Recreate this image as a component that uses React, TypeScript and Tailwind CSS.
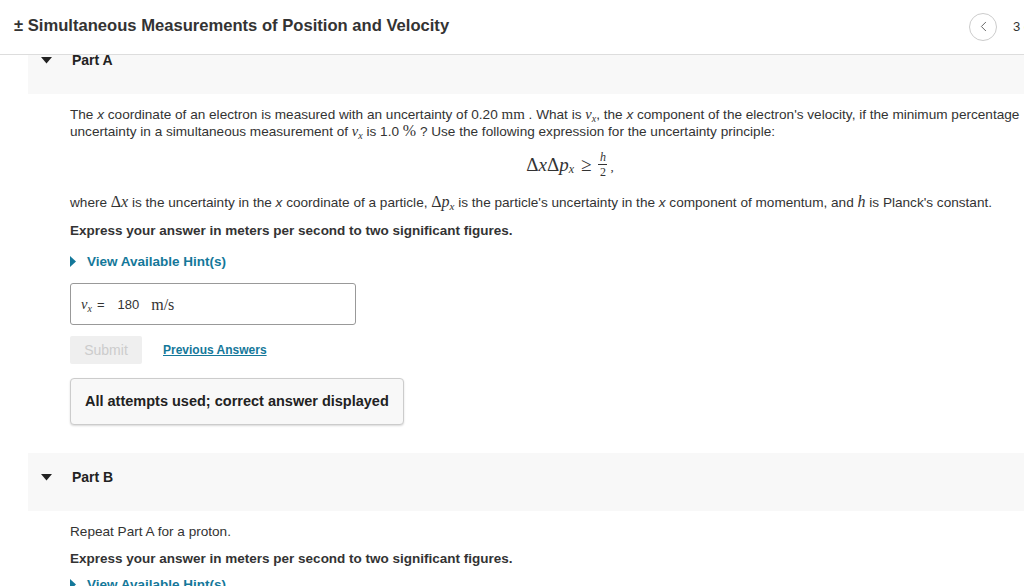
import { ChevronLeft } from 'lucide-react'

const serif = "font-['Liberation_Serif','DejaVu_Serif',serif]"

function Caret() {
  return (
    <svg width="11" height="7" viewBox="0 0 11 7" className="shrink-0">
      <path d="M0 0 L11 0 L5.5 6.5 Z" fill="#222" />
    </svg>
  )
}

function PartHeader({ label }: { label: string }) {
  return (
    <div className="h-[58px] bg-[#f8f8f8] flex items-start pt-[16px] pl-[13px] gap-[20px]">
      <div className="h-[16px] flex items-center">
        <Caret />
      </div>
      <span className="text-[14px] leading-[16px] font-bold text-[#222]">{label}</span>
    </div>
  )
}

function Hint() {
  return (
    <div className="flex items-center gap-[11px] text-[13.5px] leading-[17px] font-bold text-[#14789a]">
      <svg width="6" height="11" viewBox="0 0 6 11">
        <path d="M0 0 L6 5.5 L0 11 Z" fill="#14789a" />
      </svg>
      View Available Hint(s)
    </div>
  )
}

function Vx() {
  return (
    <span className={`${serif} italic text-[14.5px] leading-[10px]`}>
      v<sub className="text-[10px] italic align-baseline relative top-[3px]">x</sub>
    </span>
  )
}

export default function App() {
  return (
    <div className="w-[1024px] h-[586px] overflow-hidden bg-white text-[#333] font-['Liberation_Sans',Arial,sans-serif]">
      <div className="w-[1100px]">
        <header className="h-[55px] border-b border-[#ddd] flex items-center pl-[14px] pb-[1px]">
          <h1 className="w-[955px] text-[16.6px] font-bold text-[#333] whitespace-nowrap">
            ± Simultaneous Measurements of Position and Velocity
          </h1>
          <div className="flex items-center gap-[16px]">
            <div className="w-[28px] h-[28px] rounded-full border border-[#ccc] flex items-center justify-center">
              <ChevronLeft size={17} strokeWidth={1.4} color="#666" />
            </div>
            <span className="text-[13px] text-[#333]">3 of 5</span>
          </div>
        </header>

        <div className="h-[531px] overflow-hidden">
          <div className="-mt-[19px] ml-[28px]">
            <PartHeader label="Part A" />
            <div className="pl-[42px] pt-[12px] w-[1040px] text-[13.6px] leading-[17px]">
              <p className="whitespace-nowrap">
                The <i>x</i> coordinate of an electron is measured with an uncertainty of 0.20{' '}
                <span className={`${serif} text-[15px] leading-[10px]`}>mm</span> . What is <Vx />, the <i>x</i> component of
                the electron's velocity, if the minimum percentage
                <br />
                uncertainty in a simultaneous measurement of <Vx /> is 1.0{' '}
                <span className={`${serif} text-[16px] leading-[10px]`}>%</span> ? Use the following expression for the
                uncertainty principle:
              </p>

              <div className={`w-[1000px] h-[28px] mt-[10px] flex items-center justify-center ${serif} text-[19px]`}>
                <span>Δ</span>
                <span className="italic">x</span>
                <span>Δ</span>
                <span className="italic">p</span>
                <span className="italic text-[12px] relative top-[5px]">x</span>
                <span className="ml-[7px]">≥</span>
                <span className="ml-[7px] inline-flex flex-col items-center text-[12px] leading-[12px]">
                  <span className="italic">h</span>
                  <span className="w-[9px] border-t border-[#333] my-[1px]" />
                  <span>2</span>
                </span>
                <span className="text-[13px] ml-[3px] relative top-[2px]">,</span>
              </div>

              <p className="mt-[16px] whitespace-nowrap">
                where <span className={`${serif} text-[16px] leading-[10px]`}>Δ<i>x</i></span> is the uncertainty in the <i>x</i>{' '}
                coordinate of a particle, <span className={`${serif} text-[16px] leading-[10px]`}>Δ<i>p</i><sub className="text-[11px] align-baseline relative top-[3px]"><i>x</i></sub></span>{' '}
                is the particle's uncertainty in the <i>x</i> component of momentum, and{' '}
                <span className={`${serif} italic text-[16px] leading-[10px]`}>h</span> is Planck's constant.
              </p>

              <p className="mt-[11px] font-bold text-[13.5px]">Express your answer in meters per second to two significant figures.</p>

              <div className="mt-[14px]">
                <Hint />
              </div>

              <div className="mt-[13px] w-[286px] h-[42px] border border-[#999] rounded-[3px] flex items-center pl-[10px] gap-[5px] text-[13px]">
                <Vx />
                <span>=</span>
                <span className="ml-[8px]">180</span>
                <span className={`${serif} text-[16px] ml-[7px]`}>m/s</span>
              </div>

              <div className="mt-[11px] flex items-center gap-[21px]">
                <div className="w-[72px] h-[28px] bg-[#efefef] rounded-[2px] flex items-center justify-center text-[14px] text-[#ccc]">
                  Submit
                </div>
                <span className="text-[12px] font-bold text-[#14789a] underline">Previous Answers</span>
              </div>

              <div className="mt-[14px] w-[334px] h-[47px] border border-[#ccc] bg-[#f8f8f8] rounded-[4px] shadow-[0_1px_2px_rgba(0,0,0,0.15)] flex items-center pl-[14px] text-[14.5px] font-bold text-[#222]">
                All attempts used; correct answer displayed
              </div>
            </div>

            <div className="mt-[28px]">
              <PartHeader label="Part B" />
            </div>
            <div className="pl-[42px] pt-[12px] text-[13.6px] leading-[17px]">
              <p>Repeat Part A for a proton.</p>
              <p className="mt-[10px] font-bold text-[13.5px]">Express your answer in meters per second to two significant figures.</p>
              <div className="mt-[9px]">
                <Hint />
              </div>
            </div>
          </div>
        </div>
      </div>
    </div>
  )
}
